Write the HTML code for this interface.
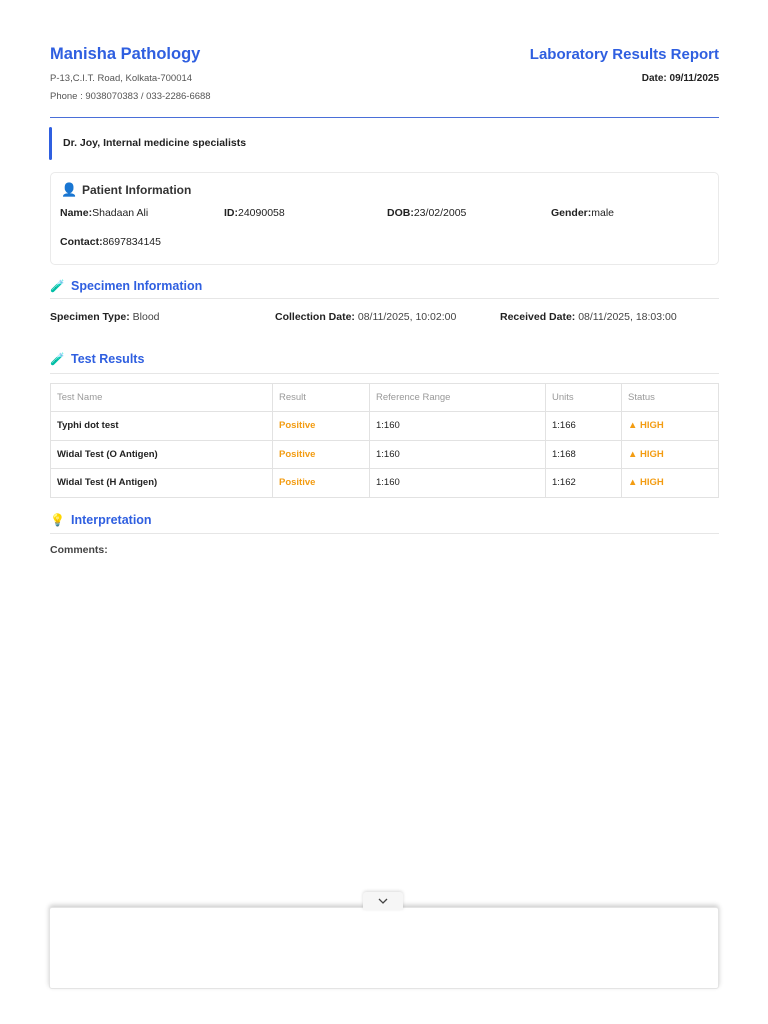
<!DOCTYPE html>
<html><head><meta charset="utf-8"><style>
*{box-sizing:border-box;margin:0;padding:0}
body{width:768px;height:1024px;background:#fff;font-family:"Liberation Sans",sans-serif;color:#222;position:relative;overflow:hidden}
.a{position:absolute}
.blue{color:#2f5fe0}
.lbl{font-weight:bold;color:#222}
.small{font-size:10.5px}
.hr{position:absolute;left:50px;width:669px;height:1px;background:#e6e6e6}
table{position:absolute;left:50px;top:383px;width:669px;border-collapse:collapse;font-size:9.5px}
td{border:1px solid #e2e2e2;padding:0 6px;height:28.5px}
th{border:1px solid #e2e2e2;padding:0 6px;height:28px;font-weight:normal;color:#999;text-align:left}
.pos{color:#f39c12;font-weight:bold}
.sec{font-size:12.5px;font-weight:bold;color:#2f5fe0}
</style></head><body>
<div class="a blue" style="left:50px;top:45px;font-size:16.5px;font-weight:bold">Manisha Pathology</div>
<div class="a" style="left:50px;top:73px;font-size:9.5px;color:#555">P-13,C.I.T. Road, Kolkata-700014</div>
<div class="a" style="left:50px;top:91px;font-size:9.5px;color:#555">Phone : 9038070383 / 033-2286-6688</div>
<div class="a blue" style="right:49px;top:46px;font-size:15px;font-weight:bold">Laboratory Results Report</div>
<div class="a" style="right:49px;top:73px;font-size:10px;font-weight:bold">Date: 09/11/2025</div>
<div class="a" style="left:50px;top:117px;width:669px;height:1px;background:#4a6fd8"></div>
<div class="a" style="left:49px;top:127px;width:3px;height:33px;background:#2f5fe0;border-radius:2px"></div>
<div class="a" style="left:63px;top:137px;font-size:10.5px;font-weight:bold">Dr. Joy, Internal medicine specialists</div>
<div class="a" style="left:50px;top:172px;width:669px;height:93px;border:1px solid #eaeaea;border-radius:5px"></div>
<div class="a" style="left:61px;top:182px;font-size:13px;color:#2f5fe0">&#128100;</div>
<div class="a" style="left:82px;top:183px;font-size:12px;font-weight:bold;color:#333">Patient Information</div>
<div class="a small" style="left:60px;top:207px"><span class="lbl">Name:</span>Shadaan Ali</div>
<div class="a small" style="left:224px;top:207px"><span class="lbl">ID:</span>24090058</div>
<div class="a small" style="left:387px;top:207px"><span class="lbl">DOB:</span>23/02/2005</div>
<div class="a small" style="left:551px;top:207px"><span class="lbl">Gender:</span>male</div>
<div class="a small" style="left:60px;top:236px"><span class="lbl">Contact:</span>8697834145</div>
<div class="a" style="left:50px;top:279px;font-size:12px">🧪</div>
<div class="a sec" style="left:71px;top:279px">Specimen Information</div>
<div class="hr" style="top:298px"></div>
<div class="a small" style="left:50px;top:311px;color:#444"><span class="lbl">Specimen Type:</span> Blood</div>
<div class="a small" style="left:275px;top:311px;color:#444"><span class="lbl">Collection Date:</span> 08/11/2025, 10:02:00</div>
<div class="a small" style="left:500px;top:311px;color:#444"><span class="lbl">Received Date:</span> 08/11/2025, 18:03:00</div>
<div class="a" style="left:50px;top:352px;font-size:12px">🧪</div>
<div class="a sec" style="left:71px;top:352px">Test Results</div>
<div class="hr" style="top:373px"></div>
<table>
<tr><th style="width:222px">Test Name</th><th style="width:97px">Result</th><th style="width:176px">Reference Range</th><th style="width:76px">Units</th><th>Status</th></tr>
<tr><td><b>Typhi dot test</b></td><td class="pos">Positive</td><td>1:160</td><td>1:166</td><td class="pos">▲ HIGH</td></tr>
<tr><td><b>Widal Test (O Antigen)</b></td><td class="pos">Positive</td><td>1:160</td><td>1:168</td><td class="pos">▲ HIGH</td></tr>
<tr><td><b>Widal Test (H Antigen)</b></td><td class="pos">Positive</td><td>1:160</td><td>1:162</td><td class="pos">▲ HIGH</td></tr>
</table>
<div class="a" style="left:50px;top:513px;font-size:12px">💡</div>
<div class="a sec" style="left:71px;top:513px">Interpretation</div>
<div class="hr" style="top:533px"></div>
<div class="a" style="left:50px;top:544px;font-size:10.5px;font-weight:bold;color:#444">Comments:</div>
<div class="a" style="left:49px;top:907px;width:670px;height:82px;background:#fff;border:1px solid #e4e4e4;border-radius:3px;box-shadow:0 -2px 5px rgba(0,0,0,.2)"></div>
<div class="a" style="left:363px;top:892px;width:40px;height:18px;background:#f6f6f6;border-radius:3px 3px 0 0;box-shadow:0 -1px 3px rgba(0,0,0,.15)">
<svg width="40" height="18"><path d="M16 7 L20 11 L24 7" fill="none" stroke="#444" stroke-width="1.3"/></svg></div>
</body></html>
